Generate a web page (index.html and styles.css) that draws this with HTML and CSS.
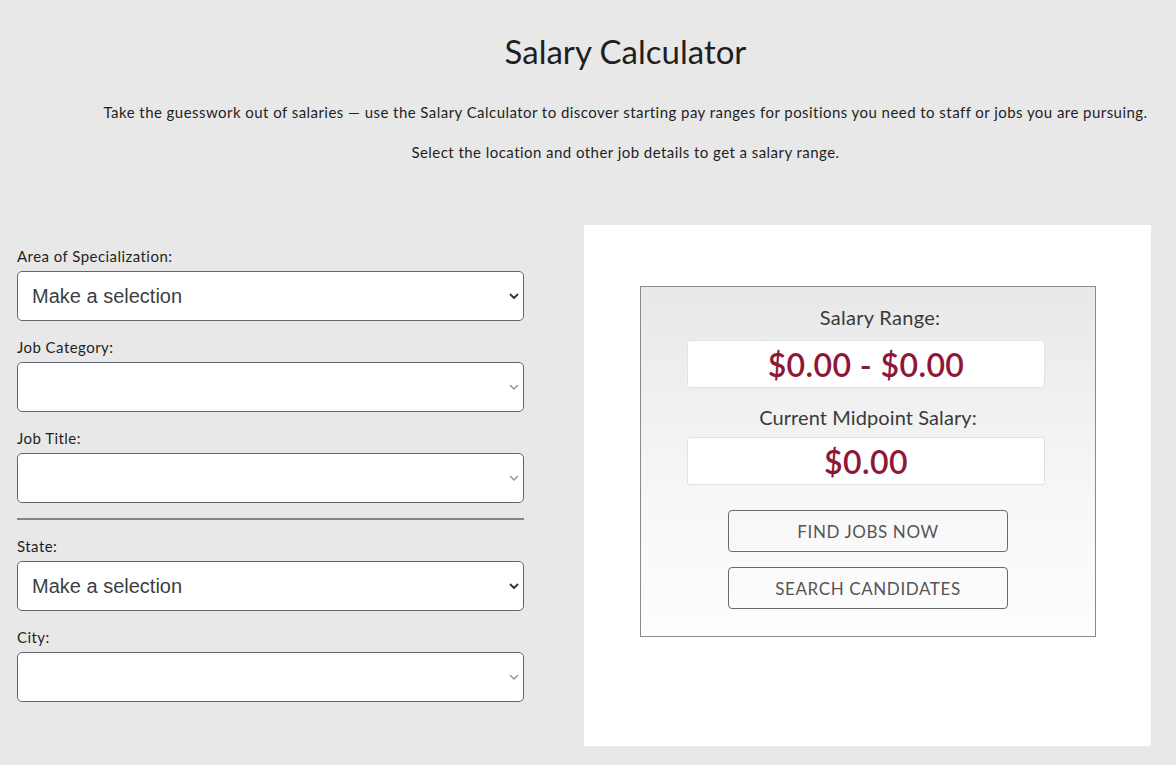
FILE: index.html
```html
<!DOCTYPE html>
<html lang="en">
<head>
<meta charset="utf-8">
<title>Salary Calculator</title>
<link rel="stylesheet" href="styles.css">
</head>
<body>
<header class="intro">
  <h1 class="title">Salary Calculator</h1>
  <p class="lead">Take the guesswork out of salaries — use the Salary Calculator to discover starting pay ranges for positions you need to staff or jobs you are pursuing.</p>
  <p class="lead">Select the location and other job details to get a salary range.</p>
</header>
<main class="calc">
  <form class="fields">
    <label class="field-label" for="area">Area of Specialization:</label>
    <div class="select-wrap">
      <select id="area" class="select"><option>Make a selection</option></select>
      <svg class="chev" width="10" height="7" viewBox="0 0 10 7"><path d="M1.5 1.5 L5 5 L8.5 1.5" fill="none" stroke="#333" stroke-width="1.8" stroke-linecap="round" stroke-linejoin="round"/></svg>
    </div>
    <label class="field-label" for="cat">Job Category:</label>
    <div class="select-wrap">
      <select id="cat" class="select" disabled><option></option></select>
      <svg class="chev" width="10" height="7" viewBox="0 0 10 7"><path d="M1.5 1.5 L5 5 L8.5 1.5" fill="none" stroke="#999" stroke-width="1.6" stroke-linecap="round" stroke-linejoin="round"/></svg>
    </div>
    <label class="field-label" for="title">Job Title:</label>
    <div class="select-wrap before-divider">
      <select id="title" class="select" disabled><option></option></select>
      <svg class="chev" width="10" height="7" viewBox="0 0 10 7"><path d="M1.5 1.5 L5 5 L8.5 1.5" fill="none" stroke="#999" stroke-width="1.6" stroke-linecap="round" stroke-linejoin="round"/></svg>
    </div>
    <hr class="divider">
    <label class="field-label" for="state">State:</label>
    <div class="select-wrap">
      <select id="state" class="select"><option>Make a selection</option></select>
      <svg class="chev" width="10" height="7" viewBox="0 0 10 7"><path d="M1.5 1.5 L5 5 L8.5 1.5" fill="none" stroke="#333" stroke-width="1.8" stroke-linecap="round" stroke-linejoin="round"/></svg>
    </div>
    <label class="field-label" for="city">City:</label>
    <div class="select-wrap">
      <select id="city" class="select" disabled><option></option></select>
      <svg class="chev" width="10" height="7" viewBox="0 0 10 7"><path d="M1.5 1.5 L5 5 L8.5 1.5" fill="none" stroke="#999" stroke-width="1.6" stroke-linecap="round" stroke-linejoin="round"/></svg>
    </div>
  </form>
  <section class="panel">
    <div class="result-box">
      <div class="result-label first">Salary Range:</div>
      <div class="result-value">$0.00 - $0.00</div>
      <div class="result-label second">Current Midpoint Salary:</div>
      <div class="result-value">$0.00</div>
      <div class="actions">
        <button class="btn" type="button">FIND JOBS NOW</button>
        <button class="btn" type="button">SEARCH CANDIDATES</button>
      </div>
    </div>
  </section>
</main>
</body>
</html>
```
FILE: styles.css
```css
html, body {
  margin: 0;
  padding: 0;
  background: #e8e8e8;
}
body {
  font-family: Lato, "Liberation Sans", sans-serif;
  color: #222;
  width: 1176px;
  height: 765px;
  overflow: hidden;
}
.intro {
  padding: 32px 0 0 75px;
  text-align: center;
}
.title {
  margin: 0;
  font-size: 33px;
  line-height: 38px;
  font-weight: 400;
  color: #1f1f1f;
}
.lead {
  margin: 0;
  font-size: 15px;
  line-height: 20px;
  letter-spacing: 0.45px;
  color: #1f1f1f;
}
.title + .lead {
  margin-top: 32px;
}
.lead + .lead {
  margin-top: 20px;
}
.calc {
  display: flex;
  align-items: flex-start;
  gap: 60px;
  padding: 63px 0 0 17px;
}
.fields {
  width: 507px;
  display: flex;
  flex-direction: column;
  padding-top: 21px;
}
.field-label {
  display: block;
  font-size: 15px;
  line-height: 20px;
  letter-spacing: 0.45px;
  color: #1f1f1f;
  margin-bottom: 5px;
}
.select-wrap {
  position: relative;
  margin-bottom: 16px;
}
.select-wrap.before-divider {
  margin-bottom: 15px;
}
.select {
  -webkit-appearance: none;
  appearance: none;
  display: block;
  width: 100%;
  height: 50px;
  box-sizing: border-box;
  border: 1px solid #5f666d;
  border-radius: 5px;
  background: #fff;
  padding: 0 30px 0 14px;
  font-family: "Liberation Sans", Arial, sans-serif;
  font-size: 20px;
  color: #3a3f44;
  opacity: 1;
}
.select:disabled {
  background: #fff;
  color: #3a3f44;
  border-color: #5f666d;
}
.chev {
  position: absolute;
  right: 5px;
  top: 22px;
}
.divider {
  margin: 0 0 16px 0;
  border: 0;
  border-top: 2px solid #858585;
  height: 0;
}
.panel {
  width: 567px;
  height: 521px;
  box-sizing: border-box;
  background: #fff;
  padding-top: 61px;
}
.result-box {
  width: 456px;
  box-sizing: border-box;
  margin-left: 56px;
  border: 1px solid #8a8a8a;
  background: linear-gradient(to bottom, #e8e8e8 0%, #f7f7f7 60%, #fdfdfd 100%);
  padding: 18px 0 27px;
  display: flex;
  flex-direction: column;
  align-items: center;
}
.result-label {
  font-size: 20px;
  line-height: 24px;
  letter-spacing: 0.1px;
  color: #3a3a3a;
  margin-bottom: 11px;
}
.result-label.first {
  padding-left: 24px;
  letter-spacing: 0.3px;
}
.result-label.second {
  margin-bottom: 8px;
}
.result-value {
  width: 358px;
  height: 48px;
  box-sizing: border-box;
  margin-left: -4px;
  background: #fff;
  border: 1px solid #e2e2e2;
  border-radius: 3px;
  display: flex;
  align-items: center;
  justify-content: center;
  font-size: 32px;
  font-weight: 600;
  letter-spacing: 0.4px;
  color: #8e1737;
  margin-bottom: 17px;
}
.actions {
  display: flex;
  flex-direction: column;
  gap: 15px;
  margin-top: 8px;
}
.btn {
  width: 280px;
  height: 42px;
  box-sizing: border-box;
  border: 1px solid #6a6a6a;
  border-radius: 4px;
  background: transparent;
  font-family: Lato, "Liberation Sans", sans-serif;
  font-size: 17px;
  letter-spacing: 0.6px;
  color: #555;
}
```
